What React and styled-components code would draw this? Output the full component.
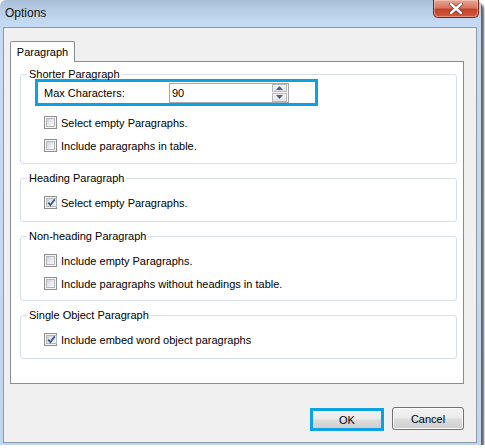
import React from 'react';
import styled, { createGlobalStyle } from 'styled-components';

const GlobalStyle = createGlobalStyle`
  html, body {
    margin: 0;
    padding: 0;
    background: #fff;
  }
  body {
    font-family: "Liberation Sans", Arial, sans-serif;
    font-size: 11px;
    color: #000;
  }
`;

const Window = styled.div`
  width: 481px;
  height: 445px;
  box-sizing: border-box;
  display: flex;
  flex-direction: column;
  border-radius: 6px 6px 0 0;
  background: linear-gradient(
    to bottom,
    #a9bfd8 0px,
    #b7cde6 10px,
    #c3daf2 22px,
    #c6dcf2 60px,
    #bfd6ee 100%
  );
  box-shadow: 3px 3px 2px rgba(0, 0, 0, 0.6);
`;

const TitleBar = styled.div`
  height: 27px;
  display: flex;
  align-items: flex-start;
  justify-content: space-between;
  padding: 0 2px 0 5px;
`;

const Title = styled.span`
  line-height: 27px;
  font-size: 12px;
  color: #111;
`;

const CloseButton = styled.div`
  width: 46px;
  height: 18px;
  box-sizing: border-box;
  display: flex;
  align-items: center;
  justify-content: center;
  border: 1px solid #6e2a22;
  border-top: none;
  border-radius: 0 0 5px 5px;
  background: linear-gradient(
    to bottom,
    #e8a595 0%,
    #d9775f 45%,
    #c5422a 55%,
    #d25a3f 100%
  );
  box-shadow: inset 0 0 0 1px rgba(255, 220, 210, 0.45);
`;

const Client = styled.div`
  flex: 1;
  margin: 0 4px 2px 3px;
  border: 1px solid #8b98a8;
  background: #f0f0f0;
  padding: 13px 12px 0 6px;
  display: flex;
  flex-direction: column;
`;

const TabStrip = styled.div`
  display: flex;
`;

const Tab = styled.div`
  position: relative;
  z-index: 1;
  width: 65px;
  height: 21px;
  box-sizing: border-box;
  margin-bottom: -1px;
  border: 1px solid #898c95;
  border-bottom: none;
  border-radius: 2px 2px 0 0;
  background: #fff;
  text-align: center;
  line-height: 20px;
`;

const Panel = styled.div`
  height: 323px;
  box-sizing: border-box;
  border: 1px solid #898c95;
  background: #fff;
  padding: 7px 6px 0 9px;
  display: flex;
  flex-direction: column;
  gap: 9px;
`;

const Group = styled.fieldset`
  margin: 0;
  min-width: 0;
  border: 1px solid #d5dfe5;
  border-radius: 3px;
  padding: ${(p) => p.$top || 0}px 0 ${(p) => p.$bottom || 0}px 0;
`;

const Legend = styled.legend`
  margin-left: 6px;
  padding: 0 2px;
  line-height: 10px;
`;

const HighlightRow = styled.div`
  margin-left: 14px;
  width: 283px;
  height: 27px;
  box-sizing: border-box;
  border: 3px solid #0ba2e3;
  display: flex;
  align-items: center;
  padding-left: 6px;
  margin-bottom: 5px;
`;

const FieldLabel = styled.span`
  width: 125px;
`;

const NumberInput = styled.div`
  width: 120px;
  height: 20px;
  box-sizing: border-box;
  border: 1px solid #a5a7ad;
  display: flex;
  align-items: stretch;
  justify-content: space-between;
  padding-left: 2px;
  line-height: 18px;
`;

const Spinner = styled.div`
  width: 15px;
  display: flex;
  flex-direction: column;
  gap: 1px;
  padding: 0 1px 0 0;
`;

const SpinButton = styled.span`
  flex: 1;
  box-sizing: border-box;
  border: 1px solid #b7b9be;
  background: linear-gradient(to bottom, #f5f5f5, #e3e3e3);
  display: flex;
  align-items: center;
  justify-content: center;
`;

const CheckRow = styled.label`
  height: 23px;
  display: flex;
  align-items: center;
  gap: 4px;
  padding-left: 23px;
`;

const CheckBox = styled.span`
  width: 13px;
  height: 13px;
  box-sizing: border-box;
  border: 1px solid #8e8f8f;
  padding: 1px;
  background: #f6f6f6;
  display: flex;
`;

const CheckInner = styled.span`
  flex: 1;
  box-sizing: border-box;
  border: 1px solid #b4b8bd;
  background: linear-gradient(135deg, #cfd3d8 0%, #eceef0 60%, #f8f8f8 100%);
  display: flex;
  align-items: center;
  justify-content: center;
`;

const ButtonRow = styled.div`
  margin-top: 23px;
  display: flex;
  justify-content: flex-end;
  align-items: flex-start;
  gap: 8px;
`;

const Button = styled.button`
  width: ${(p) => (p.$highlight ? 74 : 72)}px;
  height: 23px;
  margin-top: ${(p) => (p.$highlight ? 1 : 0)}px;
  box-sizing: border-box;
  border: ${(p) => (p.$highlight ? '3px solid #0ba2e3' : '1px solid #707070')};
  border-radius: ${(p) => (p.$highlight ? 0 : 3)}px;
  background: linear-gradient(
    to bottom,
    #f2f2f2 0%,
    #ebebeb 48%,
    #dddddd 52%,
    #cfcfcf 100%
  );
  box-shadow: ${(p) => (p.$highlight ? 'none' : 'inset 0 0 0 1px #fbfbfb')};
  font-family: inherit;
  font-size: 11px;
  color: #000;
  padding: 0;
`;

const Check = ({ checked, children }) => (
  <CheckRow>
    <CheckBox>
      <CheckInner>
        {checked && (
          <svg width="9" height="9" viewBox="0 0 9 9">
            <path
              d="M1.2 4.6 L3.4 7 L7.8 1.4"
              fill="none"
              stroke="#3c5a94"
              strokeWidth="1.8"
            />
          </svg>
        )}
      </CheckInner>
    </CheckBox>
    <span>{children}</span>
  </CheckRow>
);

const Arrow = ({ down }) => (
  <svg width="7" height="4" viewBox="0 0 7 4">
    <path d={down ? 'M0 0 H7 L3.5 4 Z' : 'M0 4 H7 L3.5 0 Z'} fill="#4c5f8c" />
  </svg>
);

export default function App() {
  return (
    <>
      <GlobalStyle />
      <Window>
        <TitleBar>
          <Title>Options</Title>
          <CloseButton>
            <svg width="14" height="11" viewBox="0 0 14 11">
              <path
                d="M2 1 L12 10 M12 1 L2 10"
                stroke="#6b3a33"
                strokeWidth="4"
                strokeLinecap="round"
              />
              <path
                d="M2 1 L12 10 M12 1 L2 10"
                stroke="#fff"
                strokeWidth="2.4"
                strokeLinecap="round"
              />
            </svg>
          </CloseButton>
        </TitleBar>
        <Client>
          <TabStrip>
            <Tab>Paragraph</Tab>
          </TabStrip>
          <Panel>
            <Group $top={0} $bottom={6}>
              <Legend>Shorter Paragraph</Legend>
              <HighlightRow>
                <FieldLabel>Max Characters:</FieldLabel>
                <NumberInput>
                  <span>90</span>
                  <Spinner>
                    <SpinButton>
                      <Arrow />
                    </SpinButton>
                    <SpinButton>
                      <Arrow down />
                    </SpinButton>
                  </Spinner>
                </NumberInput>
              </HighlightRow>
              <Check>Select empty Paragraphs.</Check>
              <Check>Include paragraphs in table.</Check>
            </Group>
            <Group $top={8} $bottom={7}>
              <Legend>Heading Paragraph</Legend>
              <Check checked>Select empty Paragraphs.</Check>
            </Group>
            <Group $top={8} $bottom={5}>
              <Legend>Non-heading Paragraph</Legend>
              <Check>Include empty Paragraphs.</Check>
              <Check>Include paragraphs without headings in table.</Check>
            </Group>
            <Group $top={8} $bottom={7}>
              <Legend>Single Object Paragraph</Legend>
              <Check checked>Include embed word object paragraphs</Check>
            </Group>
          </Panel>
          <ButtonRow>
            <Button $highlight>OK</Button>
            <Button>Cancel</Button>
          </ButtonRow>
        </Client>
      </Window>
    </>
  );
}
